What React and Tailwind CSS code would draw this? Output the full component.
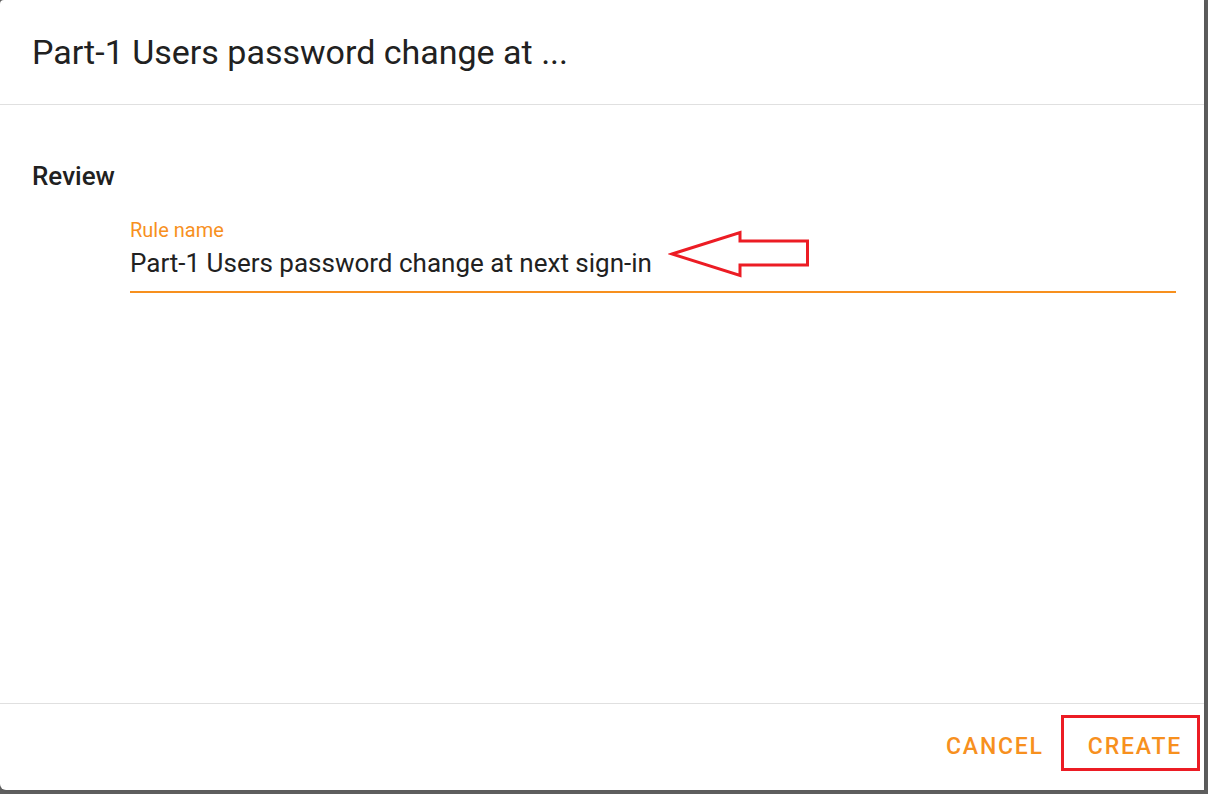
import React from 'react';

const font = { fontFamily: 'Roboto, "Liberation Sans", sans-serif' };

const Arrow = () => (
  <svg
    className="absolute left-[668px] top-[230px]"
    width="144"
    height="48"
    viewBox="0 0 144 48"
    fill="none"
  >
    <path
      d="M4 24 L72 2.5 L72 11 L139.5 11 L139.5 35 L72 35 L72 45.5 Z"
      stroke="#ec1c24"
      strokeWidth="3"
      strokeLinejoin="miter"
    />
  </svg>
);

export default function App() {
  return (
    <div className="w-[1208px] h-[794px] bg-[#5f5f5f] overflow-hidden" style={font}>
      <div className="relative w-[1204px] h-[790px] bg-white rounded-bl-[6px] rounded-tl-[4px] flex flex-col shadow-[2px_0_4px_rgba(0,0,0,0.08)]">
        <div className="h-[105px] shrink-0 border-b border-[#e0e0e0] flex items-center px-8">
          <h1 className="text-[34px] text-[#212121] font-normal leading-10">
            Part-1 Users password change at ...
          </h1>
        </div>

        <div className="flex-1 px-8 pt-[55px]">
          <h2 className="text-[26px] text-[#212121] font-medium leading-8">Review</h2>
          <div className="ml-[98px] mt-[26px] mr-[-4px] border-b-2 border-[#f7901e] pb-[12px]">
            <div className="text-[20px] leading-6 text-[#f7901e]">Rule name</div>
            <div className="text-[26px] leading-8 text-[#212121] mt-[5px]">
              Part-1 Users password change at next sign-in
            </div>
          </div>
        </div>

        <div className="h-[87px] shrink-0 border-t border-[#e0e0e0] flex items-center justify-end pr-[22px] gap-[44px]">
          <button className="text-[23px] font-medium tracking-[1.8px] text-[#f7901e]">CANCEL</button>
          <button className="text-[23px] font-medium tracking-[1.8px] text-[#f7901e]">CREATE</button>
        </div>

        <Arrow />
        <div className="absolute left-[1061px] top-[715px] w-[139px] h-[56px] border-[3px] border-[#ec1c24]" />
      </div>
    </div>
  );
}
